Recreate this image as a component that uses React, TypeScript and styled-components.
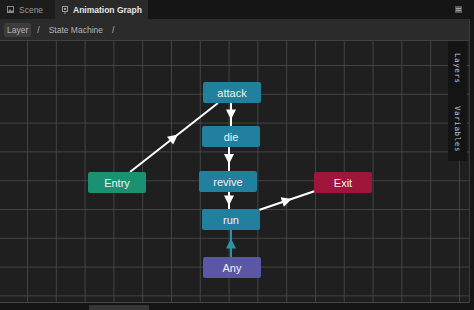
import React from "react";
import styled, { createGlobalStyle } from "styled-components";

const Global = createGlobalStyle`
  html, body { margin: 0; padding: 0; background: #161616; overflow: hidden; }
  * { box-sizing: border-box; }
`;

const Root = styled.div`
  width: 474px;
  height: 310px;
  display: flex;
  flex-direction: column;
  background: #161616;
  font-family: "Liberation Sans", Arial, sans-serif;
`;

const TabBar = styled.div`
  height: 19px;
  display: flex;
  align-items: stretch;
  background: #151515;
`;

const Tab = styled.div<{ $active?: boolean }>`
  display: flex;
  align-items: center;
  gap: 5px;
  padding-left: 7px;
  white-space: nowrap;
  background: ${(p) => (p.$active ? "#2a2a2a" : "#1c1c1c")};
  color: ${(p) => (p.$active ? "#e6e6e6" : "#9a9a9a")};
  font-size: 8.5px;
  font-weight: ${(p) => (p.$active ? 700 : 400)};
  width: ${(p) => (p.$active ? "93px" : "55px")};
  flex-shrink: 0;
`;

const Spacer = styled.div`
  flex: 1;
`;

const MenuButton = styled.div`
  width: 19px;
  display: flex;
  align-items: center;
  justify-content: center;
  margin-right: 6px;
`;

const Workspace = styled.div`
  flex: 1;
  display: flex;
  flex-direction: column;
  margin-right: 4px;
  border-right: 1px solid #3a3a3a;
`;

const Breadcrumb = styled.div`
  height: 21px;
  display: flex;
  align-items: center;
  gap: 6px;
  padding-left: 4px;
  background: #2b2b2b;
  color: #b4b4b4;
  font-size: 8.5px;
`;

const Crumb = styled.span<{ $current?: boolean }>`
  padding: 2px 3px;
  border-radius: 2px;
  background: ${(p) => (p.$current ? "#3d3d3d" : "transparent")};
`;

const Canvas = styled.div`
  position: relative;
  flex: 1;
  background-color: #1f1f1f;
  background-image: linear-gradient(to right, #434343 1px, transparent 1px),
    linear-gradient(to bottom, #434343 1px, transparent 1px);
  background-size: 28.8px 28.8px;
  background-position: 27px 24px;
  border-top: 1px solid #404040;
  border-bottom: 1px solid #464646;
  overflow: hidden;
`;

const Edges = styled.svg`
  position: absolute;
  left: 0;
  top: 0;
  width: 100%;
  height: 100%;
`;

const Node = styled.div<{ $color: string }>`
  position: absolute;
  width: 58px;
  height: 21px;
  display: flex;
  align-items: center;
  justify-content: center;
  background: ${(p) => p.$color};
  color: #f2f2f2;
  font-size: 11px;
  border-radius: 2px;
`;

const SidePanel = styled.div`
  position: absolute;
  right: 2px;
  top: 0;
  width: 19px;
  height: 120px;
  background: #141414;
  display: flex;
  flex-direction: column;
  align-items: center;
  padding-top: 12px;
  gap: 22px;
`;

const SideLabel = styled.span`
  writing-mode: vertical-rl;
  font-family: "DejaVu Sans Mono", monospace;
  font-size: 7.5px;
  letter-spacing: 0.6px;
  color: #c4c4c4;
`;

const BottomBar = styled.div`
  height: 7px;
  background: #141414;
  display: flex;
  align-items: flex-end;
  padding-left: 89px;
`;

const Thumb = styled.div`
  width: 60px;
  height: 5px;
  background: #363636;
`;

type Pt = [number, number];

const Arrow = ({ from, to, color }: { from: Pt; to: Pt; color: string }) => {
  const [x1, y1] = from;
  const [x2, y2] = to;
  const dx = x2 - x1;
  const dy = y2 - y1;
  const len = Math.hypot(dx, dy);
  const ux = dx / len;
  const uy = dy / len;
  const mx = (x1 + x2) / 2;
  const my = (y1 + y2) / 2;
  const L = 10;
  const W = 5;
  const tip: Pt = [mx + ux * L * 0.5, my + uy * L * 0.5];
  const bx = mx - ux * L * 0.5;
  const by = my - uy * L * 0.5;
  const a: Pt = [bx - uy * W, by + ux * W];
  const b: Pt = [bx + uy * W, by - ux * W];
  return (
    <g>
      <line x1={x1} y1={y1} x2={x2} y2={y2} stroke={color} strokeWidth={2} />
      <polygon points={`${tip.join(",")} ${a.join(",")} ${b.join(",")}`} fill={color} />
    </g>
  );
};

const nodes = [
  { label: "attack", x: 203, y: 41, color: "#20809e" },
  { label: "die", x: 202, y: 85, color: "#20809e" },
  { label: "revive", x: 199, y: 130, color: "#20809e" },
  { label: "run", x: 202, y: 168, color: "#20809e" },
  { label: "Any", x: 203, y: 216, color: "#5a58a6" },
  { label: "Entry", x: 88, y: 131, color: "#1a9170" },
  { label: "Exit", x: 314, y: 131, color: "#a0163a" },
];

const edges: { from: Pt; to: Pt; color: string }[] = [
  { from: [130, 131], to: [218, 62], color: "#ffffff" },
  { from: [231, 62], to: [231, 85], color: "#ffffff" },
  { from: [229, 106], to: [229, 130], color: "#ffffff" },
  { from: [229, 151], to: [229, 168], color: "#ffffff" },
  { from: [259, 169], to: [315, 150], color: "#ffffff" },
  { from: [231, 216], to: [231, 189], color: "#2a93a8" },
];

export default function App() {
  return (
    <Root>
      <Global />
      <TabBar>
        <Tab>
          <svg width="7" height="7" viewBox="0 0 7 7">
            <rect x="0.5" y="0.5" width="6" height="6" fill="none" stroke="#8a8a8a" />
            <path d="M1 6 L3 3 L4.5 5 L5.5 4 L6 6 Z" fill="#8a8a8a" />
          </svg>
          Scene
        </Tab>
        <Tab $active>
          <svg width="6" height="8" viewBox="0 0 6 8">
            <rect x="0.5" y="0.5" width="5" height="5" fill="none" stroke="#9a9a9a" />
            <rect x="2" y="2" width="2" height="2" fill="#9a9a9a" />
            <rect x="2.5" y="6" width="1" height="2" fill="#9a9a9a" />
          </svg>
          Animation Graph
        </Tab>
        <Spacer />
        <MenuButton>
          <svg width="7" height="7" viewBox="0 0 7 7">
            <rect x="0" y="0" width="7" height="7" fill="#5a5a5a" />
            <rect x="1" y="2" width="5" height="1" fill="#a8a8a8" />
            <rect x="1" y="4" width="5" height="1" fill="#a8a8a8" />
          </svg>
        </MenuButton>
      </TabBar>
      <Workspace>
        <Breadcrumb>
          <Crumb $current>Layer</Crumb>
          <span>/</span>
          <Crumb>State Machine</Crumb>
          <span>/</span>
        </Breadcrumb>
        <Canvas>
          <Edges>
            {edges.map((e, i) => (
              <Arrow key={i} {...e} />
            ))}
          </Edges>
          {nodes.map((n) => (
            <Node key={n.label} $color={n.color} style={{ left: n.x, top: n.y }}>
              {n.label}
            </Node>
          ))}
          <SidePanel>
            <SideLabel>Layers</SideLabel>
            <SideLabel>Variables</SideLabel>
          </SidePanel>
        </Canvas>
      </Workspace>
      <BottomBar>
        <Thumb />
      </BottomBar>
    </Root>
  );
}
